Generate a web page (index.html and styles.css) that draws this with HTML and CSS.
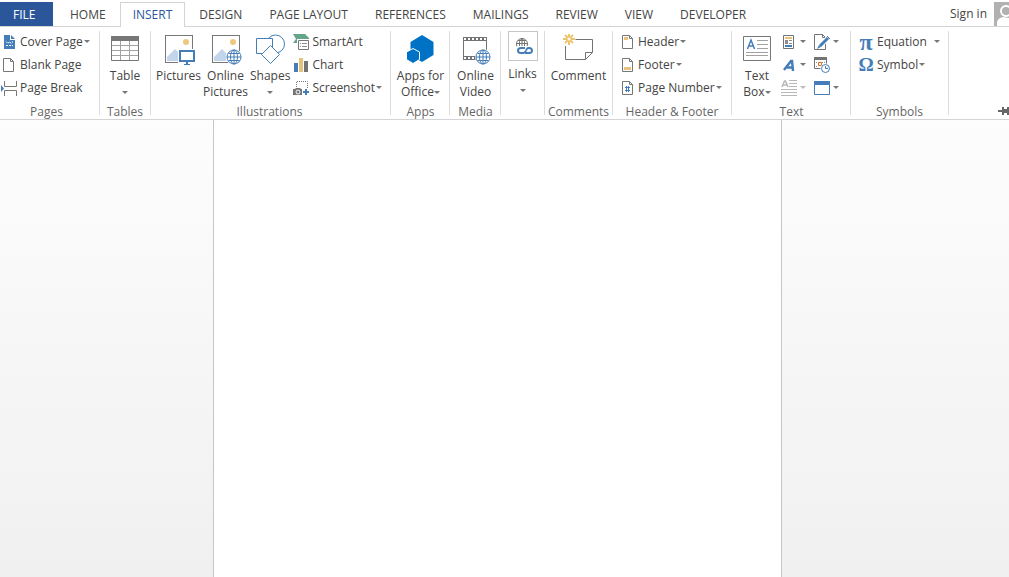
FILE: index.html
```
<!DOCTYPE html>
<html lang="en">
<head>
  <meta charset="utf-8">
  <title>Document</title>
  <link rel="stylesheet" href="styles.css">
</head>
<body>
  <!-- Shared shapes -->
  <svg class="defs" aria-hidden="true">
    <symbol id="globe" viewBox="0 0 16 16">
      <circle cx="8" cy="8" r="7" fill="#fff"/>
      <ellipse cx="8" cy="8" rx="3.5" ry="7"/>
      <path d="M1 8h14M8 1v14M2.5 4.5h11M2.5 11.5h11"/>
    </symbol>
    <symbol id="picture" viewBox="0 0 32 32">
      <rect x="2.5" y="1.5" width="27" height="27" fill="#fff" stroke="#777"/>
      <circle cx="23" cy="8" r="3" fill="#edc87e"/>
      <path d="M4 27v-4l8-8 4 4v8z" fill="#c3d5ea"/>
    </symbol>
    <symbol id="sheet" viewBox="0 0 16 16">
      <path d="M2.5 1.5h7l3 3v10h-10z" fill="#fff" stroke="#777"/>
      <path d="M9.5 1.5v3h3" fill="none" stroke="#777"/>
    </symbol>
  </svg>

  <header>
    <nav class="tabs">
      <a href="#" class="tab file">FILE</a>
      <a href="#" class="tab">HOME</a>
      <a href="#" class="tab active">INSERT</a>
      <a href="#" class="tab">DESIGN</a>
      <a href="#" class="tab">PAGE LAYOUT</a>
      <a href="#" class="tab">REFERENCES</a>
      <a href="#" class="tab">MAILINGS</a>
      <a href="#" class="tab">REVIEW</a>
      <a href="#" class="tab">VIEW</a>
      <a href="#" class="tab">DEVELOPER</a>
      <a href="#" class="sign-in">Sign in
        <svg class="avatar" width="15" height="24" viewBox="0 0 15 24">
          <rect width="15" height="24" fill="#b1b1b1"/>
          <circle cx="12" cy="9" r="5" fill="#b1b1b1" stroke="#fff" stroke-width="2"/>
          <path d="M3 24v-4q1-4 6-5l6 1v8z" fill="#fff"/>
        </svg>
      </a>
    </nav>

    <div class="ribbon">
      <section class="group pages">
        <div class="group-body">
          <div class="stack">
            <button type="button" class="small">
              <svg class="icon" viewBox="0 0 16 16">
                <path d="M3 1h6v5h5v9H3z" fill="#457db8"/>
                <path d="M10 1l4 4h-4z" fill="#457db8"/>
                <path d="M5 7.5l2 2 1.5-2 1.5 2 2-2M5 11.5h7" fill="none" stroke="#fff" stroke-dasharray="2 1"/>
              </svg>
              Cover Page<span class="caret"></span>
            </button>
            <button type="button" class="small">
              <svg class="icon"><use href="#sheet"/></svg>
              Blank Page
            </button>
            <button type="button" class="small">
              <svg class="icon" viewBox="0 0 16 16">
                <path d="M3.5 1v5.5h12V1M3.5 16v-5.5h12V16" fill="none" stroke="#777"/>
                <path d="M0 5v7l3-3.5z" fill="#457db8"/>
              </svg>
              Page Break
            </button>
          </div>
        </div>
        <div class="group-name">Pages</div>
      </section>

      <section class="group tables">
        <div class="group-body">
          <button type="button" class="big">
            <svg class="big-icon" viewBox="0 0 32 32">
              <path d="M2.5 2.5h27v24h-27z" fill="#fff" stroke="#777"/>
              <path d="M2 2h28v5H2z" fill="#777"/>
              <path d="M3 11.5h26M3 16.5h26M3 21.5h26M11.5 7v19M20.5 7v19" stroke="#a2a2a2"/>
            </svg>
            Table<br><span class="caret"></span>
          </button>
        </div>
        <div class="group-name">Tables</div>
      </section>

      <section class="group illustrations">
        <div class="group-body">
          <button type="button" class="big">
            <svg class="big-icon" viewBox="0 0 32 32">
              <use href="#picture" width="32" height="32"/>
              <path d="M15 15h17v14H15z" fill="#fff"/>
              <path d="M17 17h14v10H17z" fill="#fff" stroke="#457db8" stroke-width="2"/>
              <path d="M23 28h2v2h-2zM21 30h6v1h-6z" fill="#457db8"/>
            </svg>
            Pictures
          </button>
          <button type="button" class="big">
            <svg class="big-icon" viewBox="0 0 32 32">
              <use href="#picture" width="32" height="32"/>
              <circle cx="24" cy="23" r="8" fill="#fff"/>
              <use href="#globe" class="globe" x="16" y="15" width="16" height="16"/>
            </svg>
            Online<br>Pictures
          </button>
          <button type="button" class="big">
            <svg class="big-icon" viewBox="0 0 32 32" fill="#fff" stroke="#457db8">
              <circle cx="21.5" cy="10" r="9"/>
              <path d="M2.5 4.5h16v15h-16z"/>
              <path d="M16.5 11.5l9 9-9 9-9-9z"/>
            </svg>
            Shapes<br><span class="caret"></span>
          </button>
          <div class="stack">
            <button type="button" class="small">
              <svg class="icon" viewBox="0 0 16 16">
                <path d="M0 0h12l4 4v3H4v2H0l3-4z" fill="#65a58a"/>
                <path d="M4 5h12v11H4z" fill="#fff"/>
                <path d="M5.5 6.5h10v9h-10z" fill="#fff" stroke="#777"/>
                <path d="M7 9.5h1M9 9.5h5M7 12.5h1M9 12.5h5" stroke="#8c8c8c"/>
              </svg>
              SmartArt
            </button>
            <button type="button" class="small">
              <svg class="icon" viewBox="0 0 16 16">
                <path d="M1 6h4v9H1z" fill="#457db8"/>
                <path d="M6 1h4v14H6z" fill="#e8c27a"/>
                <path d="M11 4h4v11h-4z" fill="#737373"/>
              </svg>
              Chart
            </button>
            <button type="button" class="small">
              <svg class="icon" viewBox="0 0 16 16">
                <path d="M3.5 7V1.5h11V8" fill="none" stroke="#777" stroke-dasharray="1 1"/>
                <path d="M0 9h2l1-1h4l1 1h1v6H0z" fill="#737373"/>
                <circle cx="5" cy="12" r="2" fill="none" stroke="#fff"/>
                <path d="M10 12h6M13 9v6" stroke="#457db8" stroke-width="2"/>
              </svg>
              Screenshot<span class="caret"></span>
            </button>
          </div>
        </div>
        <div class="group-name">Illustrations</div>
      </section>

      <section class="group apps">
        <div class="group-body">
          <button type="button" class="big">
            <svg class="big-icon" viewBox="0 0 32 32" fill="#0072c6">
              <path d="M17 1l11.5 7v13L17 28 5.5 21V8z"/>
              <path d="M8 14.5l6.5 3.5v7.5L8 29.5 1.5 25.5V18z" stroke="#fff"/>
            </svg>
            Apps for<br>Office<span class="caret"></span>
          </button>
        </div>
        <div class="group-name">Apps</div>
      </section>

      <section class="group media">
        <div class="group-body">
          <button type="button" class="big">
            <svg class="big-icon" viewBox="0 0 32 32">
              <path d="M4 3h24v23H4z" fill="#737373"/>
              <path d="M5 7h22v15H5z" fill="#fff"/>
              <path d="M5 5h22M5 24h22" stroke="#fff" stroke-width="2" stroke-dasharray="2 2"/>
              <circle cx="24" cy="23" r="8" fill="#fff"/>
              <use href="#globe" class="globe" x="16" y="15" width="16" height="16"/>
            </svg>
            Online<br>Video
          </button>
        </div>
        <div class="group-name">Media</div>
      </section>

      <section class="group links">
        <div class="group-body">
          <button type="button" class="collapsed">
            <svg class="boxed-icon" viewBox="0 0 28 28">
              <g fill="none" stroke="#737373">
                <circle cx="13" cy="12" r="5.5"/>
                <path d="M13 6v9M7.5 11.5h11M9 8.5h8M10.5 15V9.5l2.5-3 2.5 3V15"/>
              </g>
              <path d="M8 14h17v9H8z" fill="#fff"/>
              <g fill="none" stroke="#457db8" stroke-width="2">
                <path d="M16 16h-4q-3 0-3 2.5t3 2.5h2q2 0 3-2.5"/>
                <path d="M16 21h4q3 0 3-2.5t-3-2.5h-1q-1 0-2 2.5"/>
              </g>
            </svg>
            Links<br><span class="caret"></span>
          </button>
        </div>
      </section>

      <section class="group comments">
        <div class="group-body">
          <button type="button" class="big">
            <svg class="big-icon" viewBox="0 0 32 32">
              <path d="M2.5 12v13.5h20l7-7v-13h-17" fill="none" stroke="#737373"/>
              <path d="M22.5 25.5v-7h7" fill="none" stroke="#737373"/>
              <path d="M6-1v4M6 7v4M0 5h4M8 5h4M2 1l3 3M7 6l3 3M10 1L7 4M5 6L2 9" stroke="#edc26c" stroke-width="2"/>
              <circle cx="6" cy="5" r="2" fill="#fff" stroke="#edc26c"/>
            </svg>
            Comment
          </button>
        </div>
        <div class="group-name">Comments</div>
      </section>

      <section class="group header-footer">
        <div class="group-body">
          <div class="stack">
            <button type="button" class="small">
              <svg class="icon" viewBox="0 0 16 16">
                <use href="#sheet" width="16" height="16"/>
                <path d="M4 3h4v3H4z" fill="#e8c27a"/>
              </svg>
              Header<span class="caret"></span>
            </button>
            <button type="button" class="small">
              <svg class="icon" viewBox="0 0 16 16">
                <use href="#sheet" width="16" height="16"/>
                <path d="M4 10h7v3H4z" fill="#e8c27a"/>
              </svg>
              Footer<span class="caret"></span>
            </button>
            <button type="button" class="small">
              <svg class="icon" viewBox="0 0 16 16">
                <use href="#sheet" width="16" height="16"/>
                <path d="M6.5 6v6M8.5 6v6M5 7.5h5M5 10.5h5" stroke="#457db8"/>
              </svg>
              Page Number<span class="caret"></span>
            </button>
          </div>
        </div>
        <div class="group-name">Header &amp; Footer</div>
      </section>

      <section class="group text">
        <div class="group-body">
          <button type="button" class="big">
            <svg class="big-icon" viewBox="0 0 32 32">
              <path d="M2.5 2.5h27v24h-27z" fill="#fff" stroke="#777"/>
              <path d="M6.5 15l3.5-9 3.5 9M8 12h4" fill="none" stroke="#457db8" stroke-width="1.5"/>
              <path d="M16 6.5h11M16 10.5h11M16 14.5h11M5 18.5h22M5 21.5h22" stroke="#a2a2a2"/>
            </svg>
            Text<br>Box<span class="caret"></span>
          </button>
          <div class="stack">
            <button type="button" class="small" aria-label="Quick Parts">
              <svg class="icon" viewBox="0 0 16 16">
                <path d="M2.5 1.5h10v13h-10z" fill="#fff" stroke="#737373"/>
                <path d="M4 3h7v2H4z" fill="#e8c27a"/>
                <path d="M4 6h3v4H4z" fill="#8c8c8c"/>
                <path d="M8 6.5h3M8 9.5h3" stroke="#8c8c8c"/>
                <path d="M4 11h7v2H4z" fill="#457db8"/>
              </svg>
              <span class="caret"></span>
            </button>
            <button type="button" class="small" aria-label="WordArt">
              <svg class="icon" viewBox="0 0 16 16">
                <path d="M3 13l7-9h1l1 10M6 10.5h6" fill="none" stroke="#457db8" stroke-width="2.5"/>
              </svg>
              <span class="caret"></span>
            </button>
            <button type="button" class="small" aria-label="Drop Cap" disabled>
              <svg class="icon" viewBox="0 0 16 16" stroke="#b8b8b8">
                <path d="M1 7l2.5-6h1L7 7M2 5h4" fill="none" stroke-width="1.5"/>
                <path d="M8 .5h8M8 3.5h8M8 6.5h8M0 9.5h16M0 12.5h16M0 15.5h16"/>
              </svg>
              <span class="caret"></span>
            </button>
          </div>
          <div class="stack">
            <button type="button" class="small" aria-label="Signature Line">
              <svg class="icon" viewBox="0 0 16 16">
                <path d="M.5.5h8l3 3v12H.5z" fill="#fff" stroke="#737373"/>
                <path d="M8.5.5v3h3" fill="none" stroke="#737373"/>
                <path d="M5 13l9-9" stroke="#fff" stroke-width="5"/>
                <path d="M6 12l8-8" stroke="#457db8" stroke-width="3"/>
                <path d="M3 15l2-4 2 2z" fill="#457db8"/>
                <path d="M13 2l3 3" stroke="#457db8"/>
              </svg>
              <span class="caret"></span>
            </button>
            <button type="button" class="small" aria-label="Date and Time">
              <svg class="icon" viewBox="0 0 16 16">
                <path d="M.5 1.5h12v10H.5z" fill="#fff" stroke="#737373"/>
                <path d="M0 0h13v3H0z" fill="#737373"/>
                <path d="M2 5.5h10M2 9.5h10" stroke="#8c8c8c" stroke-dasharray="1 1"/>
                <path d="M3 4h5v6H3z" fill="#fff"/>
                <path d="M4.5 5.5h3v3h-3z" fill="#fff" stroke="#e0701f"/>
                <circle cx="11.5" cy="11.5" r="5" fill="#fff"/>
                <circle cx="11.5" cy="11.5" r="4" fill="#fff" stroke="#457db8"/>
                <path d="M11.5 9v2.5H14" fill="none" stroke="#457db8"/>
              </svg>
            </button>
            <button type="button" class="small" aria-label="Object">
              <svg class="icon" viewBox="0 0 16 16">
                <path d="M.5 1.5h15v13H.5z" fill="#fff" stroke="#457db8"/>
                <path d="M0 1h16v4H0z" fill="#457db8"/>
              </svg>
              <span class="caret"></span>
            </button>
          </div>
        </div>
        <div class="group-name">Text</div>
      </section>

      <section class="group symbols">
        <div class="group-body">
          <div class="stack">
            <button type="button" class="small">
              <span class="glyph pi">π</span>
              Equation<span class="caret spaced"></span>
            </button>
            <button type="button" class="small">
              <span class="glyph">Ω</span>
              Symbol<span class="caret"></span>
            </button>
          </div>
        </div>
        <div class="group-name">Symbols</div>
      </section>

      <button type="button" class="pin" aria-label="Pin the ribbon">
        <svg width="11" height="8" viewBox="0 0 11 8">
          <path d="M0 4h5" stroke="#666" stroke-width="2"/>
          <path d="M4 0h2v2h3V0h2v8H9V6H6v2H4z" fill="#666"/>
        </svg>
      </button>
    </div>
  </header>

  <main class="workspace">
    <article class="page"></article>
  </main>
</body>
</html>
```
FILE: styles.css
```
* {
  box-sizing: border-box;
}

body {
  display: flex;
  flex-direction: column;
  min-height: 100vh;
  margin: 0;
  overflow-x: hidden;
  background-color: #fff;
  color: #444;
  font-family: "Open Sans", "Segoe UI", sans-serif;
  font-size: 12px;
  line-height: 16px;
}

a {
  color: inherit;
  text-decoration: none;
}

button {
  padding: 0;
  border: 0;
  background: none;
  color: inherit;
  font: inherit;
  white-space: nowrap;
}

.defs {
  display: none;
}

/* Tab strip */
.tabs {
  display: flex;
  padding-top: 2px;
  border-bottom: 1px solid #d4d4d4;
  white-space: nowrap;
}

.tab {
  height: 24px;
  padding: 0 13px 0 14px;
  line-height: 25px;
}

.file {
  width: 53px;
  margin-right: 3px;
  padding: 0 13px;
  background-color: #2b579a;
  color: #fff;
}

.active {
  height: 25px;
  margin: 0 0 -1px 1px;
  padding: 0 12px;
  border: 1px solid #d4d4d4;
  border-bottom: 0;
  background-color: #fff;
  color: #2b579a;
  line-height: 23px;
}

.sign-in {
  display: flex;
  gap: 7px;
  margin-left: auto;
  line-height: 24px;
}

/* Ribbon */
.ribbon {
  display: flex;
  padding-top: 4px;
  border-bottom: 1px solid #d4d4d4;
}

.group {
  flex: none;
  height: 88px;
  background: linear-gradient(#dcdcdc, #dcdcdc) right top / 1px 84px no-repeat;
}

.group-body {
  display: flex;
  height: 73px;
}

.group-name {
  color: #666;
  line-height: 15px;
  text-align: center;
}

.pages { width: 100px; padding-left: 1px; }
.tables { width: 51px; padding-right: 1px; }
.illustrations { width: 240px; padding-left: 5px; }
.apps { width: 59px; }
.media { width: 51px; }
.links { width: 44px; padding-right: 1px; }
.comments { width: 68px; padding-right: 1px; }
.header-footer { width: 119px; padding-left: 7px; }
.text { width: 119px; }
.symbols { width: 98px; padding-left: 7px; }

.pages .group-name {
  padding-right: 8px;
}

.illustrations .group-name,
.header-footer .group-name,
.symbols .group-name {
  padding-right: 8px;
}

.tables .group-body,
.apps .group-body,
.media .group-body,
.links .group-body,
.comments .group-body {
  justify-content: center;
}

.big,
.collapsed {
  display: block;
  align-self: flex-start;
  padding-top: 3px;
  text-align: center;
}

.big-icon {
  display: block;
  width: 32px;
  height: 32px;
  margin: 0 auto 2px;
}

.collapsed {
  padding-top: 0;
}

.boxed-icon {
  display: block;
  width: 30px;
  height: 30px;
  margin: 0 auto 5px;
  border: 1px solid #c6c6c6;
}

.stack {
  display: flex;
  flex-direction: column;
}

.small {
  display: flex;
  align-items: center;
  gap: 3px;
  height: 23px;
  padding-bottom: 2px;
}

.icon {
  flex: none;
  width: 16px;
  height: 16px;
}

.caret {
  display: inline-block;
  margin-left: 3px;
  border: 3px solid transparent;
  border-top-color: #777;
  border-bottom: 0;
  vertical-align: middle;
}

.small .caret {
  margin-left: -2px;
}

br + .caret {
  margin-left: 0;
}

.small .spaced {
  margin-left: 4px;
}

.illustrations .big + .big {
  margin-left: 2px;
}

.illustrations .stack {
  margin-left: 3px;
}

.header-footer .small {
  gap: 2px;
}

.header-footer .small .caret {
  margin-left: -1px;
}

.text .big {
  padding-left: 9px;
}

.text .stack {
  margin-left: 8px;
}

.text .small .caret {
  margin-left: 0;
}

.small:disabled .caret {
  border-top-color: #bbb;
}

.glyph {
  width: 16px;
  color: #457db8;
  font-family: "Liberation Serif", serif;
  font-size: 19px;
  font-weight: bold;
  text-align: center;
}

.pi {
  font-size: 24px;
}

.globe {
  fill: none;
  stroke: #457db8;
}

.pin {
  align-self: flex-end;
  margin-left: auto;
  padding-bottom: 4px;
  line-height: 8px;
}

.pin svg {
  display: block;
}

/* Document area */
.workspace {
  display: grid;
  flex: 1;
  grid-template-columns: 213fr 569fr 227fr;
  background: linear-gradient(#fdfdfd, #f0f0f0);
}

.page {
  grid-column: 2;
  border: solid #c6c6c6;
  border-width: 0 1px;
  background-color: #fff;
}
```
